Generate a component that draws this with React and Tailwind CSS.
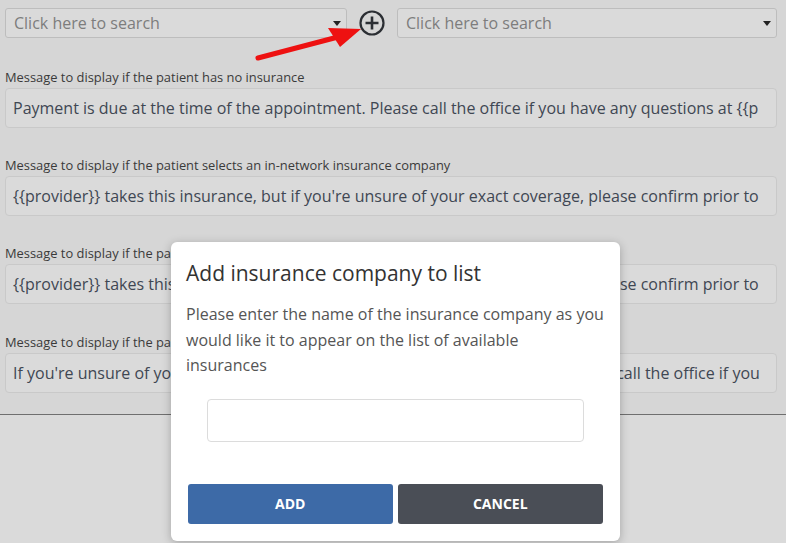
import React from "react";

const font = { fontFamily: '"Open Sans", "Noto Sans", sans-serif' };

function Caret() {
  return (
    <svg width="8" height="5" viewBox="0 0 8 5" className="shrink-0">
      <path d="M0 0 L8 0 L4 5 Z" fill="#222" />
    </svg>
  );
}

function SearchSelect({ className }) {
  return (
    <div
      className={`h-[30px] flex items-center justify-between pl-[8px] pr-[5px] rounded-[3px] border border-[#bdbdbd] bg-[#dadada] ${className}`}
    >
      <span className="text-[16px] text-[#7d7d7d] leading-none whitespace-nowrap">
        Click here to search
      </span>
      <Caret />
    </div>
  );
}

function Field({ label, text, labelMt }) {
  return (
    <div className={`flex flex-col ${labelMt}`}>
      <div className="text-[12.9px] text-[#3a3a3a] leading-[16px] h-[16px] whitespace-nowrap">
        {label}
      </div>
      <div className="mt-[3px] h-[40px] flex items-center pl-[7px] pr-[16px] rounded-[4px] border border-[#c9c9c9] bg-[#dadada]">
        <span className="text-[16px] text-[#3f4753] whitespace-nowrap overflow-hidden">{text}</span>
      </div>
    </div>
  );
}

export default function App() {
  return (
    <div className="relative w-[786px] h-[543px] overflow-hidden bg-[#d6d6d6]" style={font}>
      <div className="flex flex-col pl-[5px] pr-[9px] pt-[8px]">
        <div className="flex items-center">
          <SearchSelect className="w-[342px]" />
          <div className="w-[50px] flex justify-center">
            <svg width="28" height="28" viewBox="0 0 28 28">
              <circle cx="14" cy="14" r="11.5" fill="none" stroke="#2b2e33" strokeWidth="2.2" />
              <path d="M14 7.5 V20.5 M7.5 14 H20.5" stroke="#2b2e33" strokeWidth="2.6" />
            </svg>
          </div>
          <SearchSelect className="flex-1" />
        </div>
        <Field
          labelMt="mt-[31px]"
          label="Message to display if the patient has no insurance"
          text="Payment is due at the time of the appointment. Please call the office if you have any questions at {{p"
        />
        <Field
          labelMt="mt-[29px]"
          label="Message to display if the patient selects an in-network insurance company"
          text="{{provider}} takes this insurance, but if you're unsure of your exact coverage, please confirm prior to"
        />
        <Field
          labelMt="mt-[29px]"
          label="Message to display if the patient selects an out-of-network insurance company"
          text="{{provider}} takes this insurance, but if you're unsure of your exact coverage, please confirm prior to"
        />
        <Field
          labelMt="mt-[30px]"
          label="Message to display if the patient selects other insurance"
          text="If you're unsure of your coverage, please call your insurance company directly or call the office if you"
        />
      </div>
      <div className="mt-[21px] border-t border-[#6f6f6f] h-[200px] bg-[#dadada]" />

      {/* red arrow */}
      <svg className="absolute left-0 top-0 pointer-events-none" width="786" height="543">
        <line x1="258" y1="58" x2="338" y2="37" stroke="#ee1111" strokeWidth="5" strokeLinecap="round" />
        <polygon points="361,29 328,28 340,47" fill="#ee1111" />
      </svg>

      {/* modal */}
      <div className="absolute left-[171px] top-[242px] w-[449px] h-[299px] bg-white rounded-[6px] shadow-[0_2px_10px_rgba(0,0,0,0.25)] flex flex-col px-[15px]">
        <div className="mt-[17px] text-[21px] text-[#333] leading-[28px] whitespace-nowrap">
          Add insurance company to list
        </div>
        <p className="mt-[15px] text-[16px] text-[#555] leading-[25.5px]">
          Please enter the name of the insurance company as you
          <br />
          would like it to appear on the list of available
          <br />
          insurances
        </p>
        <div className="mt-[20px] mx-[21px] h-[43px] rounded-[4px] border border-[#dcdcdc] bg-white" />
        <div className="mt-[42px] flex gap-[5px] px-[2px]">
          <button className="w-[205px] h-[40px] rounded-[3px] bg-[#3d6aa7] text-white text-[14px] font-bold">
            ADD
          </button>
          <button className="w-[206px] h-[40px] rounded-[3px] bg-[#4a4e56] text-white text-[14px] font-bold">
            CANCEL
          </button>
        </div>
      </div>
    </div>
  );
}
